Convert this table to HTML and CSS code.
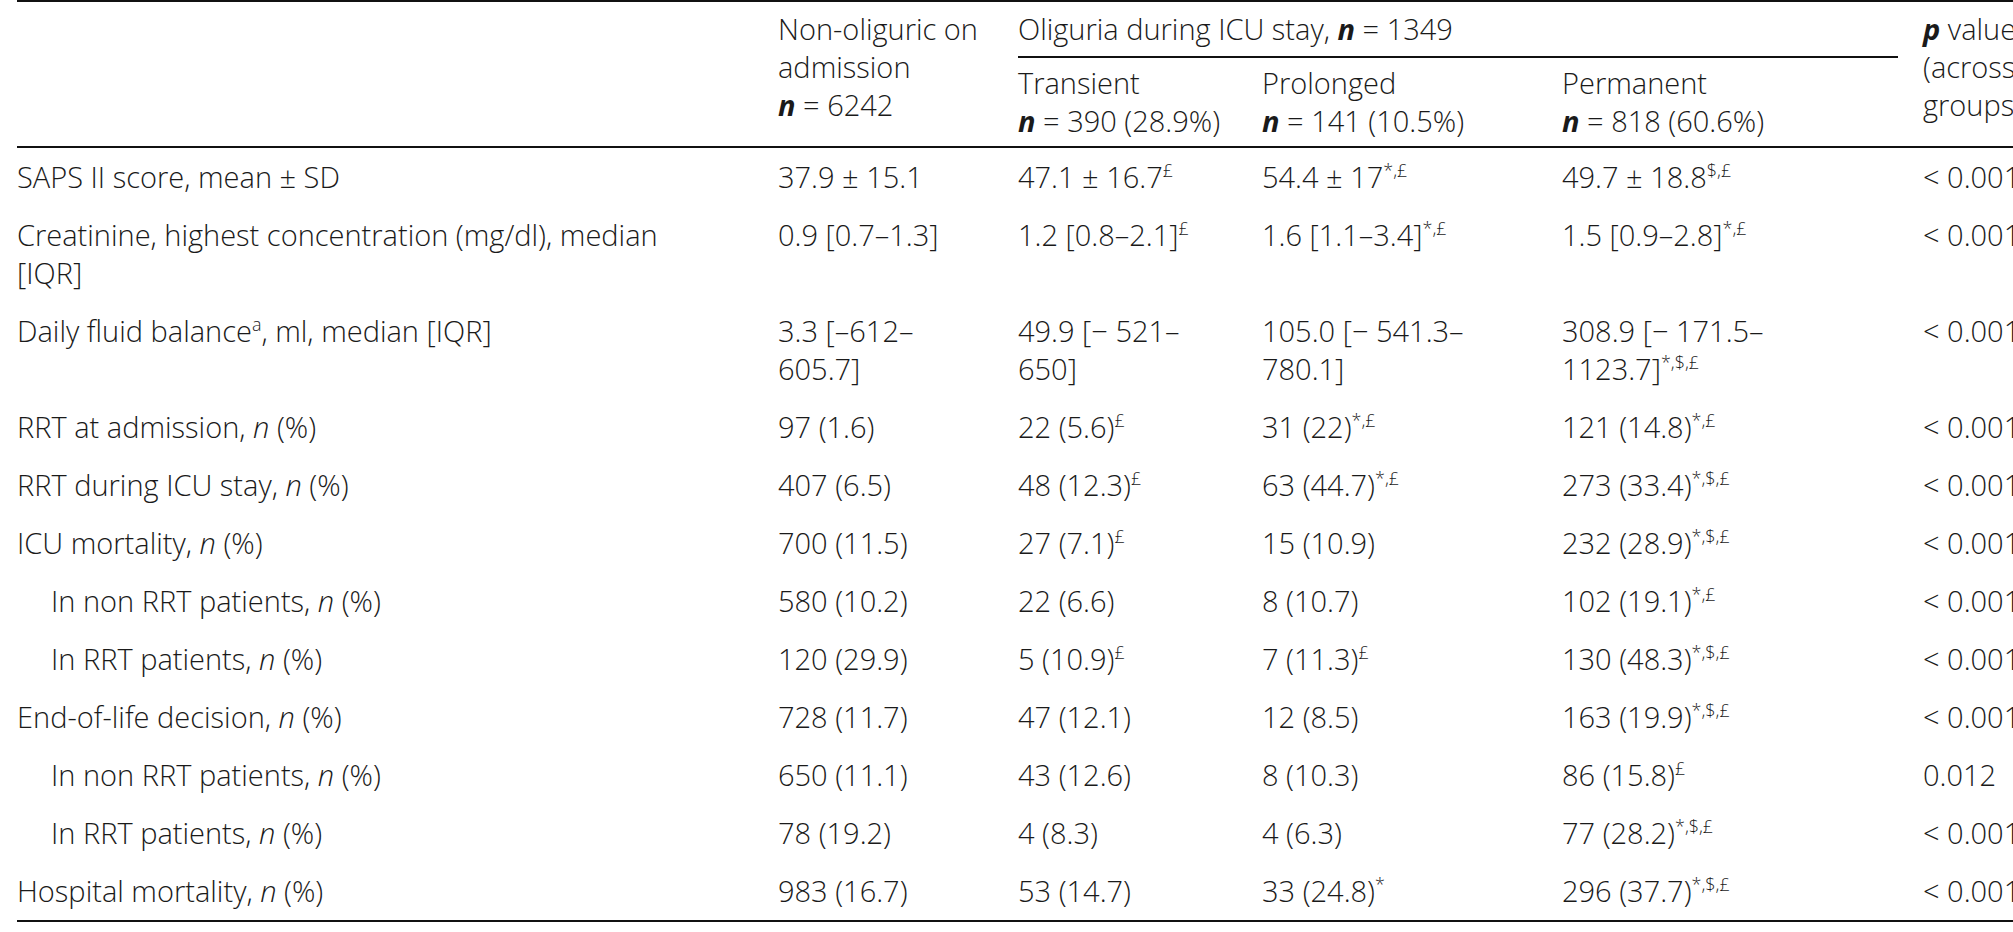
FILE: index.html
```html
<!DOCTYPE html>
<html lang="en">
<head>
<meta charset="utf-8">
<title>Table</title>
<link rel="stylesheet" href="styles.css">
</head>
<body>
<table class="tbl">
  <colgroup>
    <col class="w-label">
    <col class="w-non">
    <col class="w-tra">
    <col class="w-pro">
    <col class="w-per">
    <col class="w-p">
  </colgroup>
  <thead>
    <tr>
      <th rowspan="2" class="hc"></th>
      <th rowspan="2" class="hc">Non-oliguric on admission<br><b><i>n</i></b> = 6242</th>
      <th colspan="3" class="grp"><div class="grp-in">Oliguria during ICU stay, <b><i>n</i></b> = 1349</div></th>
      <th rowspan="2" class="hc"><b><i>p</i></b> value (across groups)</th>
    </tr>
    <tr>
      <th class="sub">Transient<br><b><i>n</i></b> = 390 (28.9%)</th>
      <th class="sub">Prolonged<br><b><i>n</i></b> = 141 (10.5%)</th>
      <th class="sub">Permanent<br><b><i>n</i></b> = 818 (60.6%)</th>
    </tr>
  </thead>
  <tbody>
    <tr><td class="lbl">SAPS II score, mean ± SD</td><td>37.9 ± 15.1</td><td>47.1 ± 16.7<sup>£</sup></td><td>54.4 ± 17<sup>*,£</sup></td><td>49.7 ± 18.8<sup>$,£</sup></td><td>&lt; 0.001</td></tr>
    <tr><td class="lbl">Creatinine, highest concentration (mg/dl), median [IQR]</td><td>0.9 [0.7–1.3]</td><td>1.2 [0.8–2.1]<sup>£</sup></td><td>1.6 [1.1–3.4]<sup>*,£</sup></td><td>1.5 [0.9–2.8]<sup>*,£</sup></td><td>&lt; 0.001</td></tr>
    <tr><td class="lbl">Daily fluid balance<sup>a</sup>, ml, median [IQR]</td><td>3.3 [–612–<br>605.7]</td><td>49.9 [− 521–<br>650]</td><td>105.0 [− 541.3–<br>780.1]</td><td>308.9 [− 171.5–<br>1123.7]<sup>*,$,£</sup></td><td>&lt; 0.001</td></tr>
    <tr><td class="lbl">RRT at admission, <i>n</i> (%)</td><td>97 (1.6)</td><td>22 (5.6)<sup>£</sup></td><td>31 (22)<sup>*,£</sup></td><td>121 (14.8)<sup>*,£</sup></td><td>&lt; 0.001</td></tr>
    <tr><td class="lbl">RRT during ICU stay, <i>n</i> (%)</td><td>407 (6.5)</td><td>48 (12.3)<sup>£</sup></td><td>63 (44.7)<sup>*,£</sup></td><td>273 (33.4)<sup>*,$,£</sup></td><td>&lt; 0.001</td></tr>
    <tr><td class="lbl">ICU mortality, <i>n</i> (%)</td><td>700 (11.5)</td><td>27 (7.1)<sup>£</sup></td><td>15 (10.9)</td><td>232 (28.9)<sup>*,$,£</sup></td><td>&lt; 0.001</td></tr>
    <tr><td class="lbl ind">In non RRT patients, <i>n</i> (%)</td><td>580 (10.2)</td><td>22 (6.6)</td><td>8 (10.7)</td><td>102 (19.1)<sup>*,£</sup></td><td>&lt; 0.001</td></tr>
    <tr><td class="lbl ind">In RRT patients, <i>n</i> (%)</td><td>120 (29.9)</td><td>5 (10.9)<sup>£</sup></td><td>7 (11.3)<sup>£</sup></td><td>130 (48.3)<sup>*,$,£</sup></td><td>&lt; 0.001</td></tr>
    <tr><td class="lbl">End-of-life decision, <i>n</i> (%)</td><td>728 (11.7)</td><td>47 (12.1)</td><td>12 (8.5)</td><td>163 (19.9)<sup>*,$,£</sup></td><td>&lt; 0.001</td></tr>
    <tr><td class="lbl ind">In non RRT patients, <i>n</i> (%)</td><td>650 (11.1)</td><td>43 (12.6)</td><td>8 (10.3)</td><td>86 (15.8)<sup>£</sup></td><td>0.012</td></tr>
    <tr><td class="lbl ind">In RRT patients, <i>n</i> (%)</td><td>78 (19.2)</td><td>4 (8.3)</td><td>4 (6.3)</td><td>77 (28.2)<sup>*,$,£</sup></td><td>&lt; 0.001</td></tr>
    <tr><td class="lbl">Hospital mortality, <i>n</i> (%)</td><td>983 (16.7)</td><td>53 (14.7)</td><td>33 (24.8)<sup>*</sup></td><td>296 (37.7)<sup>*,$,£</sup></td><td>&lt; 0.001</td></tr>
  </tbody>
</table>
</body>
</html>
```
FILE: styles.css
```css
html, body {
  margin: 0;
  padding: 0;
  background: #ffffff;
  overflow: hidden;
}

body {
  font-family: "Open Sans", "Noto Sans", sans-serif;
  font-size: 29px;
  font-weight: 350;
  line-height: 38px;
  color: #1a1a1a;
}

.tbl {
  border-collapse: collapse;
  table-layout: fixed;
  width: 2040px;
  margin-left: 17px;
  border-top: 2px solid #111;
  border-bottom: 2px solid #111;
}

.w-label { width: 761px; }
.w-non { width: 240px; }
.w-tra { width: 244px; }
.w-pro { width: 300px; }
.w-per { width: 361px; }
.w-p { width: 134px; }

th, td {
  text-align: left;
  vertical-align: top;
  font-weight: 350;
  padding: 10px 25px 10px 0;
}

td.lbl {
  padding-right: 50px;
}

thead {
  border-bottom: 2px solid #111;
}

thead th.hc {
  padding-top: 8px;
  padding-bottom: 8px;
}

thead th.grp {
  padding: 8px 25px 0 0;
}

.grp-in {
  padding-bottom: 8px;
  border-bottom: 2px solid #111;
}

thead th.sub {
  padding-top: 6px;
  padding-bottom: 6px;
}

b { font-weight: 700; }

td.ind {
  padding-left: 34px;
}

sup {
  font-size: 0.62em;
  line-height: 0;
  vertical-align: 0.62em;
}
```
